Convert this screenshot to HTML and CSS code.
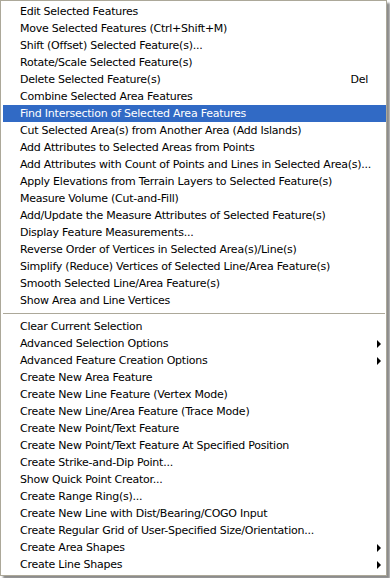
FILE: index.html
```html
<!DOCTYPE html>
<html lang="en">
<head>
  <meta charset="UTF-8" />
  <title>Feature Menu</title>
  <link rel="stylesheet" href="styles.css">
</head>
<body>
  <div class="menu">
    <div class="item">Edit Selected Features</div>
    <div class="item">Move Selected Features (Ctrl+Shift+M)</div>
    <div class="item">Shift (Offset) Selected Feature(s)...</div>
    <div class="item">Rotate/Scale Selected Feature(s)</div>
    <div class="item">Delete Selected Feature(s)<span class="key">Del</span></div>
    <div class="item">Combine Selected Area Features</div>
    <div class="item active">Find Intersection of Selected Area Features</div>
    <div class="item">Cut Selected Area(s) from Another Area (Add Islands)</div>
    <div class="item">Add Attributes to Selected Areas from Points</div>
    <div class="item">Add Attributes with Count of Points and Lines in Selected Area(s)...</div>
    <div class="item">Apply Elevations from Terrain Layers to Selected Feature(s)</div>
    <div class="item">Measure Volume (Cut-and-Fill)</div>
    <div class="item">Add/Update the Measure Attributes of Selected Feature(s)</div>
    <div class="item">Display Feature Measurements...</div>
    <div class="item">Reverse Order of Vertices in Selected Area(s)/Line(s)</div>
    <div class="item">Simplify (Reduce) Vertices of Selected Line/Area Feature(s)</div>
    <div class="item">Smooth Selected Line/Area Feature(s)</div>
    <div class="item">Show Area and Line Vertices</div>
    <div class="sep"></div>
    <div class="item">Clear Current Selection</div>
    <div class="item">Advanced Selection Options<span class="arrow"></span></div>
    <div class="item">Advanced Feature Creation Options<span class="arrow"></span></div>
    <div class="item">Create New Area Feature</div>
    <div class="item">Create New Line Feature (Vertex Mode)</div>
    <div class="item">Create New Line/Area Feature (Trace Mode)</div>
    <div class="item">Create New Point/Text Feature</div>
    <div class="item">Create New Point/Text Feature At Specified Position</div>
    <div class="item">Create Strike-and-Dip Point...</div>
    <div class="item">Show Quick Point Creator...</div>
    <div class="item">Create Range Ring(s)...</div>
    <div class="item">Create New Line with Dist/Bearing/COGO Input</div>
    <div class="item">Create Regular Grid of User-Specified Size/Orientation...</div>
    <div class="item">Create Area Shapes<span class="arrow"></span></div>
    <div class="item">Create Line Shapes<span class="arrow"></span></div>
  </div>
</body>
</html>
```

FILE: styles.css
```css
* { box-sizing: border-box; margin: 0; padding: 0; }

body {
  background: #fff;
  font-family: "DejaVu Sans", Verdana, sans-serif;
  font-size: 11px;
  letter-spacing: -0.24px;
  color: #000;
  height: 578px;
  overflow: hidden;
}

.menu {
  width: 387px;
  background: #fff;
  border: 1px solid #aca899;
  padding: 2px 0 2px 2px;
  box-shadow: 3px 3px 2px rgba(0, 0, 0, 0.45);
}

.item {
  display: flex;
  align-items: center;
  height: 17px;
  padding-left: 17px;
  white-space: nowrap;
}

.item.active {
  background: #316ac5;
  color: #fff;
}

.key {
  margin-left: auto;
  margin-right: 18px;
}

.arrow {
  margin-left: auto;
  margin-right: 5px;
  width: 0;
  height: 0;
  border-top: 4px solid transparent;
  border-bottom: 4px solid transparent;
  border-left: 4px solid #000;
}

.sep {
  height: 1px;
  margin: 4px 1px 4px 0;
  background: #aca899;
}
```
